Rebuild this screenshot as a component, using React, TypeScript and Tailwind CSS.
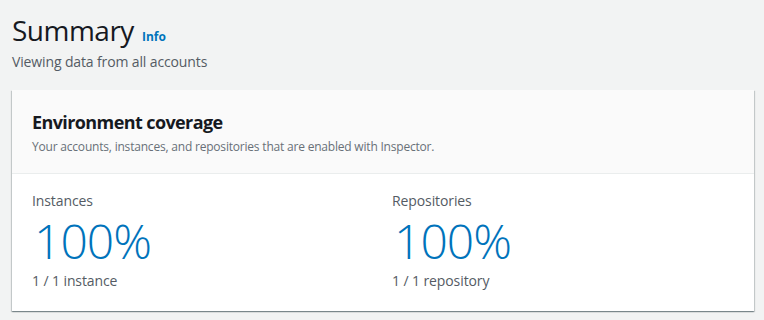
import React from "react";

export default function App() {
  const font = { fontFamily: '"Open Sans", "Noto Sans", Arial, sans-serif' };
  return (
    <div className="w-[764px] h-[320px] bg-[#f2f3f3] overflow-hidden" style={font}>
      <div className="px-[12px] pt-[10px]">
        <div className="flex items-baseline gap-[8px]">
          <h1 className="text-[28px] leading-[40px] text-[#16191f] font-normal tracking-[-0.5px]">Summary</h1>
          <a className="text-[12px] font-bold text-[#0073bb]">Info</a>
        </div>
        <p className="text-[14px] leading-[20px] text-[#545b64] mt-[2px] tracking-[-0.13px]">Viewing data from all accounts</p>
      </div>
      <div className="mx-[12px] mt-[18px] w-[742px] bg-white shadow-[0_1px_1px_0_rgba(0,28,36,0.3),1px_1px_1px_0_rgba(0,28,36,0.15),-1px_1px_1px_0_rgba(0,28,36,0.15)]">
        <div className="bg-[#fafafa] border-b border-[#eaeded] px-[20px] pt-[20px] pb-[18px]">
          <h2 className="text-[18px] leading-[24px] font-bold text-[#16191f] tracking-[-0.6px]">Environment coverage</h2>
          <p className="text-[12px] leading-[16px] text-[#687078] mt-[5px] tracking-[-0.2px]">
            Your accounts, instances, and repositories that are enabled with Inspector.
          </p>
        </div>
        <div className="grid grid-cols-2 gap-[18px] px-[20px] pt-[17px] pb-[20px]">
          <div className="flex flex-col">
            <div className="text-[14px] leading-[20px] text-[#545b64] tracking-[-0.1px]">Instances</div>
            <div className="text-[48px] leading-[48px] mt-[6px] font-light text-[#0073bb] ml-[2px] tracking-[-1px]">100%</div>
            <div className="text-[14px] leading-[20px] text-[#545b64] mt-[6px] tracking-[-0.1px]">1 / 1 instance</div>
          </div>
          <div className="flex flex-col">
            <div className="text-[14px] leading-[20px] text-[#545b64] tracking-[-0.1px]">Repositories</div>
            <div className="text-[48px] leading-[48px] mt-[6px] font-light text-[#0073bb] ml-[2px] tracking-[-1px]">100%</div>
            <div className="text-[14px] leading-[20px] text-[#545b64] mt-[6px] tracking-[-0.1px]">1 / 1 repository</div>
          </div>
        </div>
      </div>
    </div>
  );
}
